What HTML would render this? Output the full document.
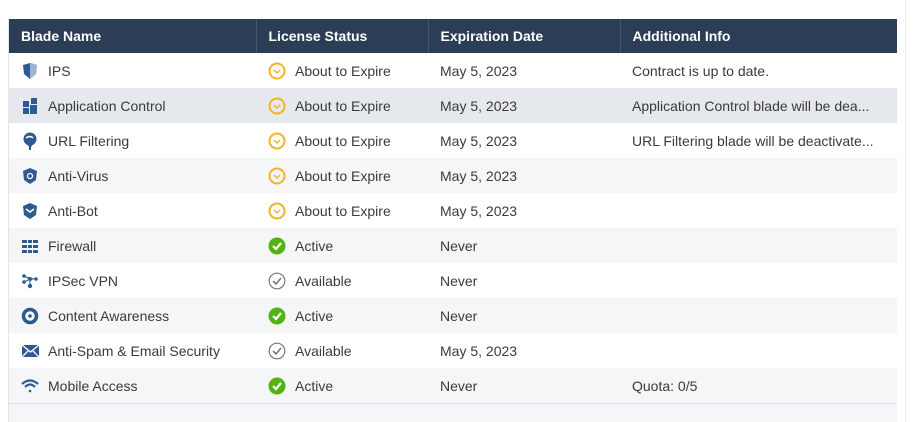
<!DOCTYPE html>
<html><head><meta charset="utf-8"><style>
body{margin:0;width:913px;height:422px;background:#fff;font-family:"Liberation Sans",sans-serif;overflow:hidden;position:relative}
.wrap{position:absolute;left:8px;top:19px;width:888px;height:403px;background:#f5f6f7;border-left:1px solid #e2e4e7}
table{border-collapse:collapse;width:888px;table-layout:fixed}
th{background:#2c3e55;color:#fff;font-weight:bold;font-size:14px;text-align:left;height:34px;padding:0 0 0 12px;border-left:1px solid #3f5570}
th:first-child{border-left:none}
td{height:35px;padding:0 0 0 12px;font-size:14px;color:#3a3a3a;white-space:nowrap;overflow:hidden;text-overflow:ellipsis}
tr.w td{background:#fff}tr.g td{background:#f5f6f8}tr.h td{background:#e5e8ec}
tr.last td{border-bottom:1px solid #dfe2e6}
.ic{display:inline-block;width:18px;height:18px;vertical-align:-4px;margin-right:9px}
.rb{position:absolute;left:905px;top:0;width:1px;height:422px;background:#eee}
</style></head><body>
<div class="rb"></div>
<div class="wrap"><table>
<colgroup><col style="width:247px"><col style="width:172px"><col style="width:192px"><col style="width:277px"></colgroup>
<tr><th>Blade Name</th><th>License Status</th><th>Expiration Date</th><th>Additional Info</th></tr>
<tr class="w"><td><svg class="ic" viewBox="0 0 18 18"><path d="M2 3 L9 1 L16 3 L15 12 L9 17 L3 12Z" fill="#2e5a8f"/><path d="M9 1 L16 3 L15 12 L9 17Z" fill="#9fb4d0"/></svg>IPS</td><td><svg class="ic" viewBox="0 0 18 18"><circle cx="9" cy="9" r="7.5" fill="none" stroke="#f5b324" stroke-width="2"/><path d="M6 8 L9 11 L12 8" fill="none" stroke="#f5b324" stroke-width="1.5"/></svg>About to Expire</td><td>May 5, 2023</td><td>Contract is up to date.</td></tr>
<tr class="h"><td><svg class="ic" viewBox="0 0 18 18" fill="#2e5a8f"><rect x="2" y="4" width="6" height="6"/><rect x="10" y="1" width="6" height="6"/><rect x="2" y="11" width="6" height="6"/><rect x="9" y="8" width="7" height="9"/></svg>Application Control</td><td><svg class="ic" viewBox="0 0 18 18"><circle cx="9" cy="9" r="7.5" fill="none" stroke="#f5b324" stroke-width="2"/><path d="M6 8 L9 11 L12 8" fill="none" stroke="#f5b324" stroke-width="1.5"/></svg>About to Expire</td><td>May 5, 2023</td><td style="padding-right:10px">Application Control blade will be dea...</td></tr>
<tr class="w"><td><svg class="ic" viewBox="0 0 18 18" fill="#2e5a8f"><circle cx="9" cy="7" r="6.5"/><path d="M6 12 H12 L10 15 V18 H8 V15Z"/><path d="M5 6 Q9 3 12 6" stroke="#fff" stroke-width="1.5" fill="none"/></svg>URL Filtering</td><td><svg class="ic" viewBox="0 0 18 18"><circle cx="9" cy="9" r="7.5" fill="none" stroke="#f5b324" stroke-width="2"/><path d="M6 8 L9 11 L12 8" fill="none" stroke="#f5b324" stroke-width="1.5"/></svg>About to Expire</td><td>May 5, 2023</td><td style="padding-right:10px">URL Filtering blade will be deactivate...</td></tr>
<tr class="g"><td><svg class="ic" viewBox="0 0 18 18"><path d="M9 1 L16 4 L15 13 L9 17 L3 13 L2 4Z" fill="#2e5a8f"/><circle cx="9" cy="9" r="2.5" fill="none" stroke="#fff" stroke-width="1.3"/></svg>Anti-Virus</td><td><svg class="ic" viewBox="0 0 18 18"><circle cx="9" cy="9" r="7.5" fill="none" stroke="#f5b324" stroke-width="2"/><path d="M6 8 L9 11 L12 8" fill="none" stroke="#f5b324" stroke-width="1.5"/></svg>About to Expire</td><td>May 5, 2023</td><td></td></tr>
<tr class="w"><td><svg class="ic" viewBox="0 0 18 18"><path d="M9 1 L16 4 L15 13 L9 17 L3 13 L2 4Z" fill="#2e5a8f"/><path d="M5 7 L9 10 L13 7" fill="none" stroke="#fff" stroke-width="1.5"/></svg>Anti-Bot</td><td><svg class="ic" viewBox="0 0 18 18"><circle cx="9" cy="9" r="7.5" fill="none" stroke="#f5b324" stroke-width="2"/><path d="M6 8 L9 11 L12 8" fill="none" stroke="#f5b324" stroke-width="1.5"/></svg>About to Expire</td><td>May 5, 2023</td><td></td></tr>
<tr class="g"><td><svg class="ic" viewBox="0 0 18 18" fill="#2e5a8f"><rect x="1" y="3" width="5" height="3"/><rect x="7" y="3" width="4" height="3"/><rect x="12" y="3" width="5" height="3"/><rect x="1" y="8" width="5" height="3"/><rect x="7" y="8" width="4" height="3"/><rect x="12" y="8" width="5" height="3"/><rect x="1" y="13" width="5" height="3"/><rect x="7" y="13" width="4" height="3"/><rect x="12" y="13" width="5" height="3"/></svg>Firewall</td><td><svg class="ic" viewBox="0 0 18 18"><circle cx="9" cy="9" r="8.5" fill="#52b313"/><path d="M5 9 L8 12 L13 6" fill="none" stroke="#fff" stroke-width="2.2"/></svg>Active</td><td>Never</td><td></td></tr>
<tr class="w"><td><svg class="ic" viewBox="0 0 18 18" fill="#2e5a8f"><circle cx="3" cy="4" r="1.8"/><circle cx="3" cy="10" r="1.8"/><circle cx="9" cy="7" r="2"/><circle cx="9" cy="14" r="2.2"/><circle cx="15" cy="7" r="1.8"/><path d="M3 4 L9 7 L15 7 M9 7 L9 14 M3 10 L9 7" stroke="#2e5a8f" stroke-width="1"/></svg>IPSec VPN</td><td><svg class="ic" viewBox="0 0 18 18"><circle cx="9" cy="9" r="7.8" fill="none" stroke="#777" stroke-width="1.2"/><path d="M5 9 L8 12 L13 6" fill="none" stroke="#777" stroke-width="1.6"/></svg>Available</td><td>Never</td><td></td></tr>
<tr class="g"><td><svg class="ic" viewBox="0 0 18 18"><circle cx="9" cy="9" r="6.5" fill="none" stroke="#2e5a8f" stroke-width="3.5"/><circle cx="9" cy="9" r="1.8" fill="#2e5a8f"/></svg>Content Awareness</td><td><svg class="ic" viewBox="0 0 18 18"><circle cx="9" cy="9" r="8.5" fill="#52b313"/><path d="M5 9 L8 12 L13 6" fill="none" stroke="#fff" stroke-width="2.2"/></svg>Active</td><td>Never</td><td></td></tr>
<tr class="w"><td><svg class="ic" viewBox="0 0 18 18"><rect x="1" y="3" width="17" height="12" fill="#2e5a8f"/><path d="M1 3 L9.5 10 L18 3 M1 15 L7 9 M18 15 L12 9" fill="none" stroke="#fff" stroke-width="1.3"/></svg>Anti-Spam &amp; Email Security</td><td><svg class="ic" viewBox="0 0 18 18"><circle cx="9" cy="9" r="7.8" fill="none" stroke="#777" stroke-width="1.2"/><path d="M5 9 L8 12 L13 6" fill="none" stroke="#777" stroke-width="1.6"/></svg>Available</td><td>May 5, 2023</td><td></td></tr>
<tr class="g last"><td><svg class="ic" viewBox="0 0 18 18" fill="none" stroke="#2e5a8f" stroke-width="2.2"><path d="M1 7 Q9 0 17 7"/><path d="M4 10 Q9 5 14 10"/><circle cx="9" cy="14" r="1.3" fill="#2e5a8f" stroke="none"/></svg>Mobile Access</td><td><svg class="ic" viewBox="0 0 18 18"><circle cx="9" cy="9" r="8.5" fill="#52b313"/><path d="M5 9 L8 12 L13 6" fill="none" stroke="#fff" stroke-width="2.2"/></svg>Active</td><td>Never</td><td>Quota: 0/5</td></tr>
</table></div>
</body></html>
